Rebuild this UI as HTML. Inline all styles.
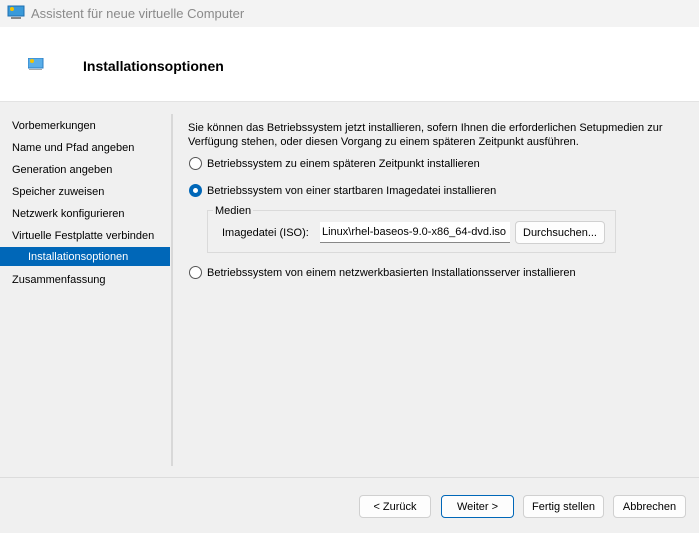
<!DOCTYPE html>
<html><head><meta charset="utf-8"><style>
*{margin:0;padding:0;box-sizing:border-box}
body{width:699px;height:533px;background:#f0f0f0;font-family:"Liberation Sans",sans-serif;font-size:11px;color:#000;position:relative;overflow:hidden}
.a{position:absolute;white-space:nowrap}
.btn{position:absolute;top:495px;height:23px;background:#fdfdfd;border:1px solid #d0d0d0;border-radius:4px;text-align:center;line-height:22px;font-size:11px}
.rad{position:absolute;width:13px;height:13px;border:1px solid #555;border-radius:50%;background:#fff}
</style></head><body>
<div class="a" style="left:0;top:0;width:699px;height:27px;background:#f3f3f3"></div>
<svg class="a" style="left:7px;top:5px" width="18" height="15"><rect x="1" y="1" width="16" height="10" fill="#3a9ad9" stroke="#1f6fb0"/><circle cx="5" cy="4" r="2" fill="#f5c400"/><rect x="4" y="12" width="10" height="2" fill="#888"/></svg>
<div class="a" style="left:31px;top:6px;font-size:13px;color:#8a8a8a">Assistent für neue virtuelle Computer</div>
<div class="a" style="left:0;top:27px;width:699px;height:75px;background:#fff;border-bottom:1px solid #e3e3e3"></div>
<svg class="a" style="left:28px;top:58px" width="16" height="14"><rect x="0" y="0" width="15" height="10" fill="#5aaee8" stroke="#2b7fc4"/><circle cx="4" cy="3" r="2" fill="#f5c400"/><rect x="1" y="11" width="13" height="1" fill="#aaa"/></svg>
<div class="a" style="left:83px;top:58px;font-size:14px;font-weight:bold">Installationsoptionen</div>
<div class="a" style="left:12px;top:120px">Vorbemerkungen</div>
<div class="a" style="left:12px;top:142px">Name und Pfad angeben</div>
<div class="a" style="left:12px;top:164px">Generation angeben</div>
<div class="a" style="left:12px;top:186px">Speicher zuweisen</div>
<div class="a" style="left:12px;top:208px">Netzwerk konfigurieren</div>
<div class="a" style="left:12px;top:230px">Virtuelle Festplatte verbinden</div>
<div class="a" style="left:0;top:247px;width:170px;height:19px;background:#0067b8"></div>
<div class="a" style="left:28px;top:251px;color:#fff">Installationsoptionen</div>
<div class="a" style="left:12px;top:274px">Zusammenfassung</div>
<div class="a" style="left:171px;top:114px;width:2px;height:352px;background:#d8d8d8"></div>
<div class="a" style="left:188px;top:121px;line-height:14px">Sie können das Betriebssystem jetzt installieren, sofern Ihnen die erforderlichen Setupmedien zur<br>Verfügung stehen, oder diesen Vorgang zu einem späteren Zeitpunkt ausführen.</div>
<div class="rad" style="left:189px;top:157px"></div>
<div class="a" style="left:207px;top:158px">Betriebssystem zu einem späteren Zeitpunkt installieren</div>
<div class="rad" style="left:189px;top:184px;border:4px solid #0067b8"></div>
<div class="a" style="left:207px;top:185px">Betriebssystem von einer startbaren Imagedatei installieren</div>
<div class="a" style="left:207px;top:210px;width:409px;height:43px;border:1px solid #dadada"></div>
<div class="a" style="left:213px;top:205px;background:#f0f0f0;padding:0 2px">Medien</div>
<div class="a" style="left:222px;top:227px">Imagedatei (ISO):</div>
<div class="a" style="left:320px;top:222px;width:190px;height:21px;background:#fff;border-bottom:1px solid #888;padding:4px 0 0 2px;overflow:hidden">Linux\rhel-baseos-9.0-x86_64-dvd.iso</div>
<div class="a" style="left:515px;top:221px;width:90px;height:23px;background:#fdfdfd;border:1px solid #d0d0d0;border-radius:4px;text-align:center;line-height:22px">Durchsuchen...</div>
<div class="rad" style="left:189px;top:266px"></div>
<div class="a" style="left:207px;top:267px">Betriebssystem von einem netzwerkbasierten Installationsserver installieren</div>
<div class="a" style="left:0;top:477px;width:699px;height:1px;background:#dcdcdc"></div>
<div class="btn" style="left:359px;width:72px">&lt; Zurück</div>
<div class="btn" style="left:441px;width:73px;border-color:#0067b8">Weiter &gt;</div>
<div class="btn" style="left:523px;width:81px">Fertig stellen</div>
<div class="btn" style="left:613px;width:73px">Abbrechen</div>
</body></html>
